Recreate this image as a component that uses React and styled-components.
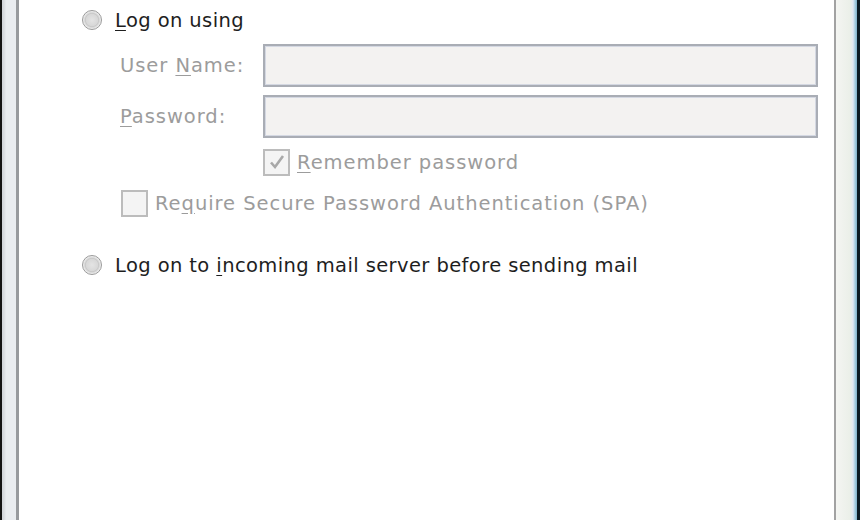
import React from 'react'
import styled, { createGlobalStyle } from 'styled-components'

const Global = createGlobalStyle`
  html, body { margin: 0; padding: 0; background: #fff; }
  body { font-family: "DejaVu Sans", Verdana, sans-serif; }
`

const Window = styled.div`
  display: flex;
  width: 860px;
  height: 520px;
  overflow: hidden;
`

const LeftFrame = styled.div`
  width: 16px;
  flex: none;
  background: linear-gradient(to right, #141414 0, #141414 2px, #cfd3d8 2px, #dfe2e6 5px, #e9ecf0 6px, #e9ecf0 18px);
  border-right: 3px solid #979a9e;
  margin-right: 3px;
`

const RightFrame = styled.div`
  width: 24px;
  flex: none;
  border-left: 2px solid #a2a2a2;
  background: linear-gradient(to right, #f4f5f2 0, #eaefe8 15px, #e2e8f2 17px, #a9cfe0 19px, #7fb0c8 21px, #0c1a22 21px);
`

const Content = styled.div`
  flex: 1;
  background: #fff;
  padding: 8px 0 0 60px;
  display: flex;
  flex-direction: column;
  font-size: 19.5px;
  letter-spacing: 0.4px;
  color: #1e1e1e;
`

const Row = styled.div`
  display: flex;
  align-items: center;
  height: ${p => p.$height || 24}px;
  margin-top: ${p => p.$top || 0}px;
  margin-left: ${p => p.$indent || 0}px;
  color: ${p => (p.$disabled ? '#9c9c9c' : '#1e1e1e')};
  letter-spacing: ${p => (p.$disabled ? '0.95px' : '0.4px')};
`

const Radio = styled.span`
  width: 18px;
  height: 18px;
  border-radius: 50%;
  flex: none;
  border: 1px solid #9a9a9a;
  background: radial-gradient(circle at 50% 50%, #e4e4e4 0, #d8d8d8 45%, #c9c9c9 52%, #f2f2f2 70%, #e0e0e0 100%);
  margin-right: 13px;
`

const Check = styled.span`
  width: 23px;
  height: 23px;
  flex: none;
  border: 2px solid #bcbcbc;
  background: #f4f4f4;
  margin-right: 7px;
  display: flex;
  align-items: center;
  justify-content: center;
`

const Key = styled.span`
  text-decoration: underline;
  text-underline-offset: 3px;
`

const Fields = styled.div`
  display: grid;
  grid-template-columns: 143px 555px;
  grid-auto-rows: 43px;
  row-gap: 8px;
  margin: 12px 0 0 38px;
  color: #9c9c9c;
  letter-spacing: 0.95px;
`

const Label = styled.div`
  display: flex;
  align-items: center;
`

const Input = styled.div`
  border: 2px solid #a9adb5;
  box-shadow: inset 0 0 0 1px #d4d8e2;
  background: #f3f2f1;
`

export default function App() {
  return (
    <>
      <Global />
      <Window>
        <LeftFrame />
        <Content>
          <Row>
            <Radio />
            <span><Key>L</Key>og on using</span>
          </Row>
          <Fields>
            <Label><span>User <Key>N</Key>ame:</span></Label>
            <Input />
            <Label><span><Key>P</Key>assword:</span></Label>
            <Input />
          </Fields>
          <Row $disabled $indent={181} $top={9} $height={30}>
            <Check>
              <svg width="18" height="18" viewBox="0 0 18 18">
                <path d="M3 9.5 L7 14 L15 3" fill="none" stroke="#a8a8a8" strokeWidth="2.6" />
              </svg>
            </Check>
            <span><Key>R</Key>emember password</span>
          </Row>
          <Row $disabled $indent={39} $top={11} $height={30}>
            <Check />
            <span>Re<Key>q</Key>uire Secure Password Authentication (SPA)</span>
          </Row>
          <Row $top={35}>
            <Radio />
            <span>Log on to <Key>i</Key>ncoming mail server before sending mail</span>
          </Row>
        </Content>
        <RightFrame />
      </Window>
    </>
  )
}
